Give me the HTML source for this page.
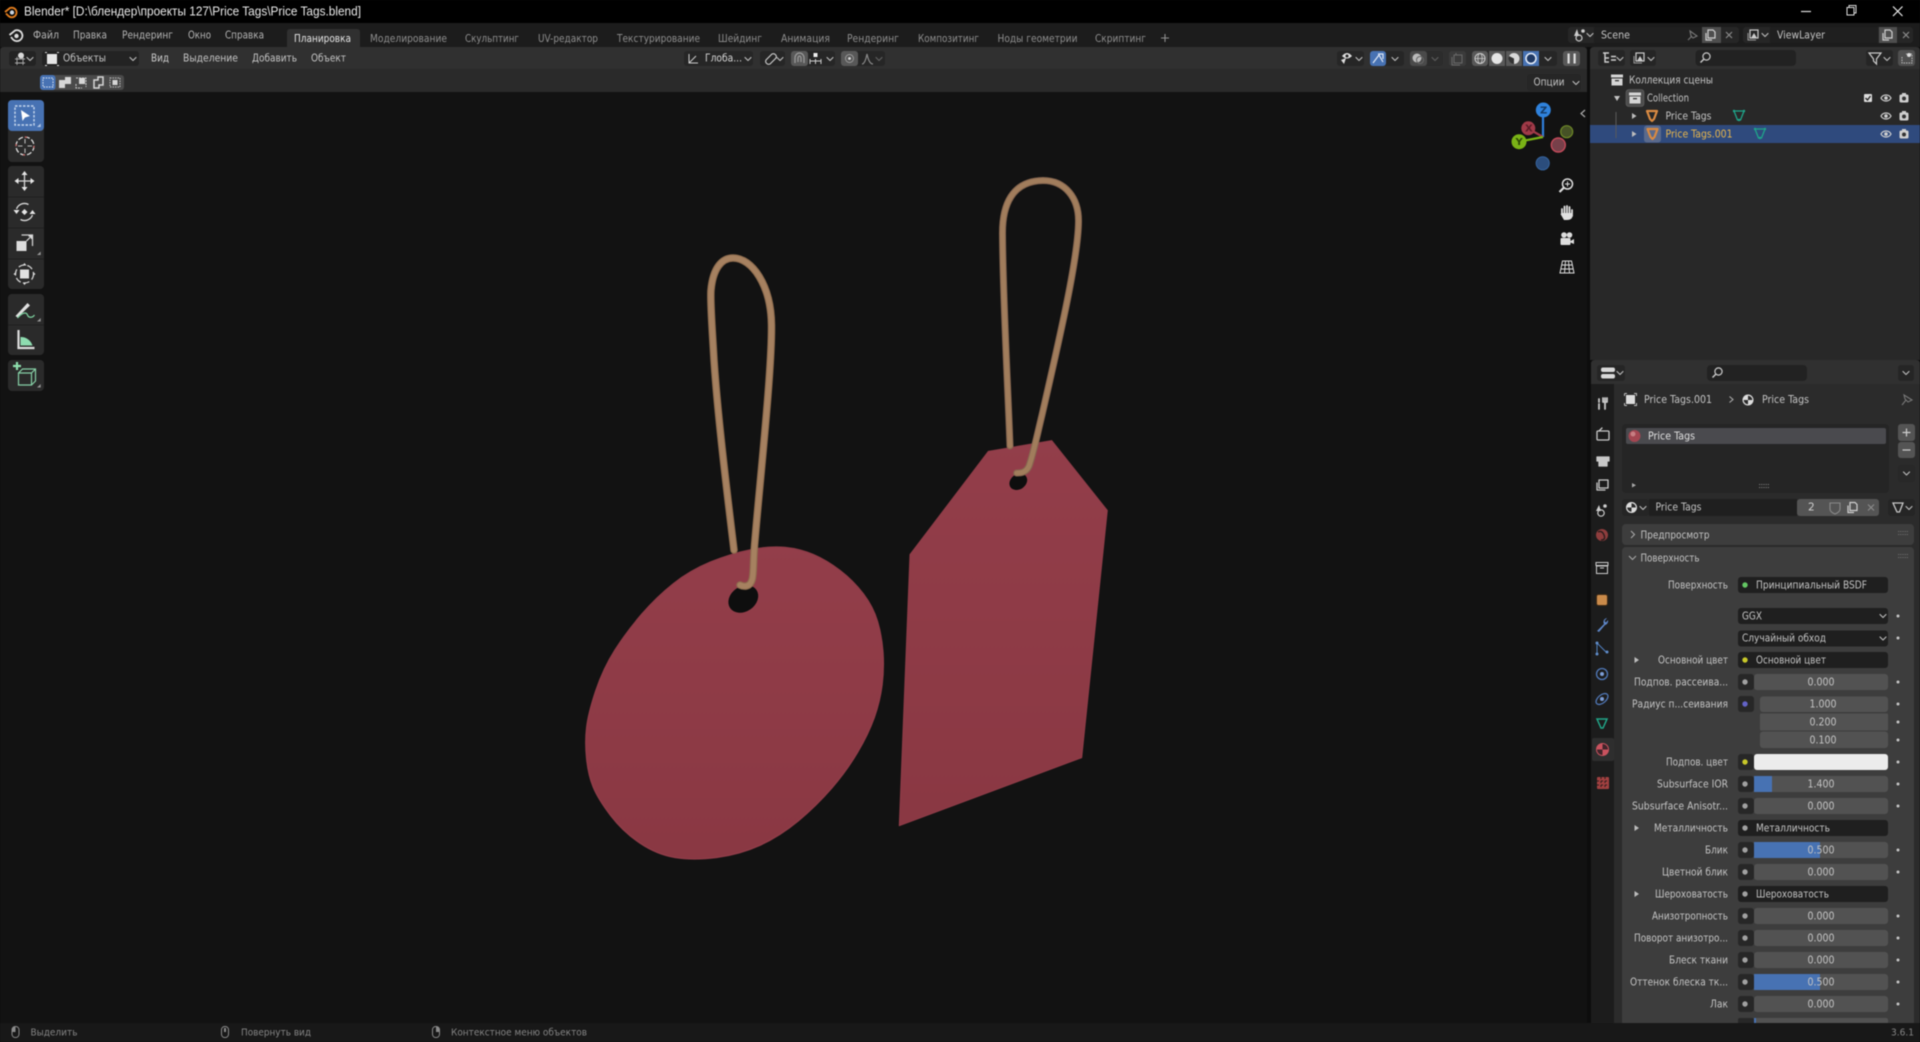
<!DOCTYPE html>
<html lang="ru"><head><meta charset="utf-8"><title>Blender</title>
<style>
html,body{margin:0;padding:0;background:#0d0d0d;width:1920px;height:1042px;overflow:hidden}
svg{display:block;filter:blur(.4px)}
text{font-family:"DejaVu Sans","Liberation Sans",sans-serif;font-size:10.5px;fill:#c4c4c4;white-space:pre;transform:translateY(-.6px)}
.m{fill:#b4b4b4}.d{fill:#8e8e8e}.w{fill:#e6e6e6}.s{fill:#858585;font-size:10px}
.ic{fill:none;stroke:#c8c8c8;stroke-width:1.3;stroke-linecap:round;stroke-linejoin:round}
.f{fill:#1f1f1f}.b{fill:#545454}.p{fill:#3d3d3d}
</style></head><body>
<svg width="1920" height="1042" viewBox="0 0 1920 1042" xmlns="http://www.w3.org/2000/svg">
<defs>
<path id="ch" d="M-3,-1.5L0,1.5L3,-1.5" fill="none" stroke="#b8b8b8" stroke-width="1.2" stroke-linecap="round" stroke-linejoin="round"/>
<path id="arr" d="M-2,-3L2.5,0L-2,3Z" fill="#bdbdbd"/>
<g id="eye"><path d="M-5,0C-3,-4 3,-4 5,0C3,4 -3,4 -5,0Z" fill="none" stroke="#d0d0d0" stroke-width="1.2"/><circle r="1.8" fill="#d0d0d0"/></g>
<g id="cam"><rect x="-4.5" y="-3.5" width="9" height="8" rx="1.5" fill="#cfcfcf"/><rect x="-2" y="-5" width="4" height="2" fill="#cfcfcf"/><circle cy=".5" r="2" fill="#333"/></g>
<g id="tri"><path d="M-5,-5L5,-5L2,3L0,5L-2,3Z" fill="none" stroke="#d98a42" stroke-width="2.2" stroke-linejoin="round"/></g>
<g id="mesh"><path d="M-5,-5L5,-5L1.5,4H-1.5Z" fill="none" stroke="#1fa58a" stroke-width="1.3"/><circle cx="-5" cy="-5" r="1.2" fill="#1fa58a"/><circle cx="5" cy="-5" r="1.2" fill="#1fa58a"/><circle cy="4" r="1.2" fill="#1fa58a"/></g>
<g id="coll"><rect x="-6" y="-5.5" width="12" height="3" fill="#d6d6d6"/><rect x="-5.5" y="-1.5" width="11" height="7" fill="#d6d6d6"/><rect x="-2" y="0" width="4" height="1.3" fill="#333"/></g>
<g id="mat"><circle r="5.5" fill="#dcdcdc"/><path d="M0,0V-4.3A4.3,4.3 0 0 1 4.300,0Z M0,0V4.300A4.300,4.300 0 0 1 -4.300,0Z" fill="#2a2a2a"/></g>
<g id="copy"><path d="M-3,-5H2L4,-3V3H-3Z M-5,-2V5H1" fill="none" stroke="#d0d0d0" stroke-width="1.2"/></g>
<g id="x"><path d="M-3,-3L3,3M3,-3L-3,3" stroke="#8a8a8a" stroke-width="1.2"/></g>
<g id="mag"><circle cx="1.5" cy="-1.5" r="3.6" fill="none" stroke="#c8c8c8" stroke-width="1.2"/><path d="M-1,1L-4.5,4.5" stroke="#c8c8c8" stroke-width="1.5"/></g>
<circle id="o" r="1.5" fill="#c6c6c6"/>
<g id="mouse"><rect x="-3.5" y="-5.5" width="7" height="11" rx="3.2" fill="none" stroke="#8a8a8a" stroke-width="1"/></g>
<linearGradient id="tg" x1="0" y1="0" x2="0" y2="1"><stop offset="0" stop-color="#933e4a"/><stop offset="1" stop-color="#8a3843"/></linearGradient>
</defs>

<!-- base -->
<rect width="1920" height="1042" fill="#0d0d0d"/>
<rect width="1920" height="23" fill="#000"/>
<rect y="23" width="1920" height="24" fill="#1c1c1c"/>
<rect y="1024" width="1920" height="18" fill="#181818"/>

<!-- title -->
<g transform="translate(11,12.500)"><circle cx="1" r="2.200" fill="#c9d4e0"/><path d="M-6,-.5L-1,-4.500A4.800,4.800 0 1 1 -2.500,3.500L-5,1" fill="none" stroke="#e07c1e" stroke-width="1.900"/></g>
<text x="24" y="16" textLength="337" lengthAdjust="spacingAndGlyphs" style="font-size:12.5px;fill:#e8e8e8;font-family:'Liberation Sans',sans-serif">Blender* [D:\блендер\проекты 127\Price Tags\Price Tags.blend]</text>
<path d="M1801,11.500H1811" stroke="#ddd" stroke-width="1.2"/>
<path d="M1847,7.500H1854V15H1847ZM1849,7.500V5.500H1856V13H1854" fill="none" stroke="#ddd" stroke-width="1"/>
<path d="M1893,6.500L1902.500,16M1902.500,6.500L1893,16" stroke="#eee" stroke-width="1.2"/>

<!-- topbar -->
<g transform="translate(16,36)"><circle cx=".5" r="2.200" fill="#ddd"/><path d="M-6.500,-1L-1,-5.500A5.500,5.500 0 1 1 -3,3.500L-5,1" fill="none" stroke="#ddd" stroke-width="1.800"/></g>
<text class="m" x="33" y="39" textLength="26" lengthAdjust="spacingAndGlyphs">Файл</text>
<text class="m" x="73" y="39" textLength="34" lengthAdjust="spacingAndGlyphs">Правка</text>
<text class="m" x="122" y="39" textLength="51" lengthAdjust="spacingAndGlyphs">Рендеринг</text>
<text class="m" x="188" y="39" textLength="23" lengthAdjust="spacingAndGlyphs">Окно</text>
<text class="m" x="225" y="39" textLength="39" lengthAdjust="spacingAndGlyphs">Справка</text>
<path d="M287,47V32Q287,29 290,29H357Q360,29 360,32V47Z" fill="#303030"/>
<text class="w" x="294" y="42.500" textLength="57" lengthAdjust="spacingAndGlyphs">Планировка</text>
<text class="d" x="370" y="42.500" textLength="77" lengthAdjust="spacingAndGlyphs">Моделирование</text>
<text class="d" x="465" y="42.500" textLength="54" lengthAdjust="spacingAndGlyphs">Скульптинг</text>
<text class="d" x="538" y="42.500" textLength="60" lengthAdjust="spacingAndGlyphs">UV-редактор</text>
<text class="d" x="617" y="42.500" textLength="83" lengthAdjust="spacingAndGlyphs">Текстурирование</text>
<text class="d" x="718" y="42.500" textLength="44" lengthAdjust="spacingAndGlyphs">Шейдинг</text>
<text class="d" x="781" y="42.500" textLength="49" lengthAdjust="spacingAndGlyphs">Анимация</text>
<text class="d" x="847" y="42.500" textLength="52" lengthAdjust="spacingAndGlyphs">Рендеринг</text>
<text class="d" x="918" y="42.500" textLength="61" lengthAdjust="spacingAndGlyphs">Композитинг</text>
<text class="d" x="997.500" y="42.500" textLength="80" lengthAdjust="spacingAndGlyphs">Ноды геометрии</text>
<text class="d" x="1095" y="42.500" textLength="51" lengthAdjust="spacingAndGlyphs">Скриптинг</text>
<path d="M1161,38H1169M1165,34V42" stroke="#8e8e8e" stroke-width="1.100"/>

<!-- scene / viewlayer -->
<rect x="1568" y="27" width="171" height="16" rx="3" fill="#262626"/>
<rect x="1594" y="27" width="108" height="16" fill="#1f1f1f"/>
<g transform="translate(1580,35)"><circle cx="-1" cy="3" r="3" fill="none" stroke="#ccc" stroke-width="1.200"/><path d="M-3,-6L-6,1H-1Z" fill="#ccc"/><circle cx="3" cy="-4" r="1.800" fill="#ccc"/></g>
<use href="#ch" x="1590" y="35"/>
<text x="1601" y="39" textLength="29" lengthAdjust="spacingAndGlyphs">Scene</text>
<path d="M1688,40L1692,36M1690,31L1697,36L1693,38L1691,36Z" fill="none" stroke="#777" stroke-width="1.100"/>
<rect x="1702" y="27" width="19" height="16" fill="#4e4e4e"/><use href="#copy" x="1711" y="35"/>
<use href="#x" x="1729" y="35"/>
<rect x="1743" y="27" width="170" height="16" rx="3" fill="#262626"/>
<rect x="1770" y="27" width="108" height="16" fill="#1f1f1f"/>
<g transform="translate(1754,35)"><rect x="-4" y="-5" width="8" height="8" fill="none" stroke="#ccc" stroke-width="1.200"/><path d="M-3,3L0,-2L3,3Z" fill="#ccc"/><path d="M-6,-2V5H2" stroke="#999" fill="none"/></g>
<use href="#ch" x="1765" y="35"/>
<text x="1777" y="39" textLength="48" lengthAdjust="spacingAndGlyphs">ViewLayer</text>
<rect x="1879" y="27" width="18" height="16" fill="#4e4e4e"/><use href="#copy" x="1888" y="35"/>
<use href="#x" x="1906" y="35"/>

<!-- 3D viewport -->
<rect x="0" y="47" width="1587" height="977" fill="#121212"/>
<path d="M0,69V51Q0,47 4,47H1583Q1587,47 1587,51V69Z" fill="#303030"/>
<rect y="69" width="1587" height="23" fill="#2a2a2a"/>

<!-- header left -->
<rect x="9" y="51" width="27" height="15" rx="3" fill="#232323"/>
<g transform="translate(20,58)"><path d="M-5,1H5M-5,5H5M-3,-1V7M3,-1V7" stroke="#aaa" stroke-width=".9"/><circle cx="1" cy="-2.500" r="3" fill="#d8d8d8"/></g><use href="#ch" x="30" y="59"/>
<rect x="42" y="51" width="97" height="15" rx="3" fill="#232323"/>
<g><rect x="47" y="54" width="10" height="10" fill="#e6e6e6"/><path d="M45,52.500H47M57,52.500H59M45,65.500H47M57,65.500H59" stroke="#ddd"/></g>
<text x="63" y="62" textLength="43" lengthAdjust="spacingAndGlyphs">Объекты</text>
<use href="#ch" x="133" y="59"/>
<text class="w" x="151" y="62" textLength="18" lengthAdjust="spacingAndGlyphs" style="fill:#cfcfcf">Вид</text>
<text x="183" y="62" textLength="55" lengthAdjust="spacingAndGlyphs">Выделение</text>
<text x="252" y="62" textLength="45" lengthAdjust="spacingAndGlyphs">Добавить</text>
<text x="311" y="62" textLength="35" lengthAdjust="spacingAndGlyphs">Объект</text>

<!-- select modes -->
<rect x="40" y="75" width="84" height="15" rx="3" fill="#4a4a4a"/>
<rect x="40" y="75" width="15.500" height="15" rx="3" fill="#4772b3"/>
<rect x="43" y="78" width="10" height="9" fill="none" stroke="#dfe8f5" stroke-dasharray="1.500 1.200"/>
<path d="M59,80H65V77H71V84H65V88H59Z" fill="#d6d6d6"/>
<path d="M76,78H86V87M76,84V88H82" fill="none" stroke="#ccc" stroke-dasharray="2 1"/><rect x="79" y="78" width="6" height="6" fill="#d6d6d6"/>
<path d="M94,80H98V77H103V85H99V88H94Z" fill="none" stroke="#d6d6d6" stroke-width="1.500"/>
<rect x="110" y="78" width="10" height="9" fill="none" stroke="#bbb" stroke-dasharray="1.500 1"/><rect x="112.500" y="80" width="5" height="5" fill="#d6d6d6"/>

<!-- header centre -->
<rect x="684" y="51" width="69" height="15" rx="3" fill="#262626"/>
<path d="M689,54V63H698M689,63L696,56" fill="none" stroke="#ccc" stroke-width="1"/>
<text x="705" y="62" textLength="37" lengthAdjust="spacingAndGlyphs" style="fill:#d6d6d6">Глоба...</text>
<use href="#ch" x="748" y="59"/>
<rect x="760" y="51" width="25" height="15" rx="3" fill="#262626"/>
<path d="M772,54A3,3 0 0 1 776,58L770,64A3,3 0 0 1 766,60Z" fill="none" stroke="#ccc" stroke-width="1.100"/><use href="#ch" x="780" y="59"/>
<rect x="791" y="51" width="44" height="15" rx="3" fill="#262626"/>
<rect x="791" y="51" width="17" height="15" rx="3" fill="#585858"/>
<path d="M795,63V58A4.500,5 0 0 1 804,58V63M798,62V58A1.500,2 0 0 1 801,58V62" fill="none" stroke="#9a9a9a" stroke-width="1.300"/>
<path d="M810,61H821M810,59V64M821,59V64M815.500,59V64" stroke="#ccc" fill="none"/><rect x="813.500" y="53" width="4" height="4" fill="#eee"/>
<use href="#ch" x="830" y="59"/>
<rect x="841" y="51" width="44" height="15" rx="3" fill="#262626"/>
<rect x="841" y="51" width="17" height="15" rx="3" fill="#585858"/>
<circle cx="849.500" cy="58.500" r="4" fill="none" stroke="#9a9a9a"/><circle cx="849.500" cy="58.500" r="1.400" fill="#ddd"/>
<path d="M862,64Q865,64 867,54Q869,64 873,64" fill="none" stroke="#8a8a8a" stroke-width="1.200"/><use href="#ch" x="879" y="59" opacity=".4"/>

<!-- header right -->
<rect x="1337" y="51" width="27" height="15" rx="3" fill="#262626"/>
<path d="M1342,56Q1347,50 1352,56Q1347,61 1342,56Z" fill="#ddd"/><circle cx="1347" cy="56" r="1.500" fill="#222"/><path d="M1341,60L1346,58L1344,64Z" fill="#ddd"/><use href="#ch" x="1359" y="59"/>
<rect x="1370" y="51" width="34" height="15" rx="3" fill="#262626"/>
<rect x="1370" y="51" width="16" height="15" rx="3" fill="#4772b3"/>
<path d="M1373,63L1379,55L1383,62M1378,54H1383V59" fill="none" stroke="#dce6f5" stroke-width="1.200"/><use href="#ch" x="1395" y="59"/>
<rect x="1410" y="51" width="33" height="15" rx="3" fill="#2c2c2c"/>
<rect x="1410" y="51" width="17" height="15" rx="3" fill="#4a4a4a"/>
<circle cx="1417" cy="58" r="4.500" fill="#bbb"/><circle cx="1420" cy="60" r="3.500" fill="none" stroke="#666"/><use href="#ch" x="1435" y="59" opacity=".35"/>
<rect x="1449" y="51" width="17" height="15" rx="3" fill="#3b3b3b"/>
<path d="M1454,55H1462V63H1454ZM1456,55V53M1452,57V65H1460" fill="none" stroke="#6a6a6a"/>
<rect x="1472" y="51" width="85" height="15" rx="3" fill="#262626"/>
<rect x="1472" y="51" width="16" height="15" rx="3" fill="#585858"/><rect x="1489" y="51" width="16" height="15" fill="#585858"/><rect x="1506" y="51" width="16" height="15" fill="#585858"/><rect x="1523" y="51" width="16" height="15" fill="#4772b3"/>
<circle cx="1480" cy="58.500" r="5" fill="none" stroke="#ccc"/><ellipse cx="1480" cy="58.500" rx="2.200" ry="5" fill="none" stroke="#ccc" stroke-width=".8"/><path d="M1475,58.500H1485" stroke="#ccc" stroke-width=".8"/>
<circle cx="1497" cy="58.500" r="5.500" fill="#e4e4e4"/>
<circle cx="1514" cy="58.500" r="5.500" fill="#d8d8d8"/><path d="M1514,58.500V64A5.500,5.500 0 0 1 1509,56Z" fill="#333"/>
<circle cx="1531" cy="58.500" r="5" fill="#203a66" stroke="#e6eefa" stroke-width="1.500"/>
<use href="#ch" x="1548" y="59"/>
<rect x="1563" y="51" width="17" height="15" rx="3" fill="#585858"/>
<rect x="1567.500" y="53.500" width="2.200" height="10" fill="#ddd"/><rect x="1573.500" y="53.500" width="2.200" height="10" fill="#ddd"/>
<rect x="1527" y="74" width="54" height="17" rx="3" fill="#262626"/>
<text x="1533.500" y="86" textLength="31" lengthAdjust="spacingAndGlyphs">Опции</text><use href="#ch" x="1576" y="83"/>

<!-- scene objects -->
<path d="M750.900,549.800Q770,546 785,547.500Q800,549 813.400,554.700Q826.700,560.400 840,570.600Q853.300,580.800 863.300,594Q873.300,607.300 877.500,621.700Q881.700,636 882.900,652.300Q884,668.600 882,684.800Q880,701 874.200,717.500Q868.300,734 857.500,752.300Q846.700,770.600 831.700,788Q816.700,805.300 798.400,820.700Q780,836 760,845.200Q740,854.300 716.700,857.400Q693.300,860.400 675,857.400Q656.700,854.300 640,843Q623.300,831.800 610.800,815.500Q598.300,799.200 593.300,787Q588.300,774.700 586.700,758.400Q585,742 586.700,727.800Q588.300,713.500 595.800,691Q603.300,668.600 615,650.200Q626.700,631.800 641.700,614.400Q656.700,597 673.400,583.800Q690,570.600 710.900,562Q731.700,553.500 750.900,549.800Z" fill="url(#tg)" stroke="#8f3c48" stroke-width="1.500"/>
<ellipse cx="743.300" cy="599" rx="16" ry="12.500" transform="rotate(-35 743.300 599)" fill="#0e0e0e"/>
<path d="M734,550C728,500 718,420 714,360C712,325 710,300 711,290C713,268 722,258 733,258C752,258 771,285 771.500,325C772,370 760,480 755,540C753,560 754,575 752,580C750,587 744,587 740,585" fill="none" stroke="#8f6d4f" stroke-width="7.500" stroke-linecap="round"/>
<path d="M734,550C728,500 718,420 714,360C712,325 710,300 711,290C713,268 722,258 733,258C752,258 771,285 771.500,325C772,370 760,480 755,540C753,560 754,575 752,580C750,587 744,587 740,585" fill="none" stroke="#a68160" stroke-width="5.200" stroke-linecap="round"/>
<path d="M899.300,825.700L910,554.600L988.300,451.400L1051.700,440.600L1107.300,510.400L1081.700,757.600Z" fill="url(#tg)" stroke="#8f3c48" stroke-width="1" stroke-linejoin="round"/>
<ellipse cx="1018.300" cy="481.800" rx="9.500" ry="7.500" transform="rotate(-35 1018.300 481.800)" fill="#0e0e0e"/>
<path d="M1010,446C1008,390 1003,300 1002.500,235C1002,205 1012,181 1043,180.500C1065,180.500 1079,198 1078.500,222C1078,260 1058,345 1042,415C1036,440 1033,455 1029,466C1026,473 1020,473 1016.700,473" fill="none" stroke="#876750" stroke-width="7" stroke-linecap="round"/>
<path d="M1010,446C1008,390 1003,300 1002.500,235C1002,205 1012,181 1043,180.500C1065,180.500 1079,198 1078.500,222C1078,260 1058,345 1042,415C1036,440 1033,455 1029,466C1026,473 1020,473 1016.700,473" fill="none" stroke="#a17d5c" stroke-width="4.800" stroke-linecap="round"/>

<!-- toolbar -->
<rect x="8" y="100" width="36" height="62" rx="4" fill="#2a2a2a"/>
<rect x="8" y="100" width="36" height="31" rx="4" fill="#4772b3"/>
<rect x="15" y="106" width="19" height="19" fill="none" stroke="#c6d6ee" stroke-width="1.400" stroke-dasharray="2.500 1.500"/>
<path d="M21,110L30,116L25,117.500L22.500,121Z" fill="#fff"/>
<circle cx="25" cy="146" r="9" fill="none" stroke="#ddd" stroke-width="1.300" stroke-dasharray="5 2"/><circle cx="25" cy="146" r="9" fill="none" stroke="#c45a5a" stroke-width="1.300" stroke-dasharray="2 12"/>
<path d="M25,139V143.500M25,148.500V153M18,146H22.500M27.500,146H32" stroke="#bbb" stroke-width="1.100"/>
<path d="M40.700,123.500V127H37Z" fill="#b7c9e6"/>
<rect x="8" y="166" width="36" height="123" rx="4" fill="#2a2a2a"/>
<path d="M8,197H44M8,228H44M8,259H44" stroke="#1c1c1c" stroke-width=".7"/>
<g transform="translate(24.500,181)"><path d="M0,-7V7M-7,0H7" stroke="#d8d8d8" stroke-width="1.300"/><path d="M0,-10L-3,-6H3ZM0,10L-3,6H3ZM-10,0L-6,-3V3ZM10,0L6,-3V3Z" fill="#e6e6e6"/></g>
<g transform="translate(24.500,212)"><path d="M-8,-3A8.500,8.500 0 0 1 4,-7.500M8,3A8.500,8.500 0 0 1 -4,7.500" fill="none" stroke="#d8d8d8" stroke-width="1.300"/><path d="M0,-3L3,0L0,3L-3,0Z" fill="#e6e6e6"/><path d="M-11,-2H-5L-8,2ZM11,2H5L8,-2Z" fill="#e6e6e6"/></g>
<g transform="translate(24.500,243)"><rect x="-8" y="-2" width="10" height="10" fill="#dcdcdc"/><path d="M-3,-8H8V3" fill="none" stroke="#d0d0d0" stroke-width="1.300"/><path d="M2,-2L7,-7M4,-7H7V-4" fill="none" stroke="#ddd" stroke-width="1.200"/></g>
<path d="M40.700,251.500V255H37Z" fill="#999"/>
<g transform="translate(24.500,274)"><circle r="9" fill="none" stroke="#d0d0d0" stroke-width="1.300" stroke-dasharray="6 3"/><rect x="-4.500" y="-4.500" width="9" height="9" fill="#e0e0e0"/><path d="M0,-11L-2,-8.500H2ZM0,11L-2,8.500H2ZM-11,0L-8.500,-2V2ZM11,0L8.500,-2V2Z" fill="#ddd"/></g>
<rect x="8" y="294" width="36" height="61" rx="4" fill="#2a2a2a"/>
<path d="M8,325H44" stroke="#1c1c1c" stroke-width=".7"/>
<g transform="translate(24.500,310)"><path d="M-9,6L3,-7L5.500,-4.500L-7,7.500Z" fill="#e0e0e0"/><path d="M-7,8C-2,2 2,2 3,5S8,8 10,5" fill="none" stroke="#7ed2a0" stroke-width="1.200"/></g>
<path d="M40.700,318V321.500H37Z" fill="#999"/>
<g transform="translate(24.500,340)"><path d="M-6,-10V8H10" fill="none" stroke="#dcdcdc" stroke-width="2.200"/><path d="M-4,-3A12,12 0 0 1 8,5.500H-4Z" fill="#8edcb0"/></g>
<rect x="8" y="360" width="36" height="31" rx="4" fill="#2a2a2a"/>
<g transform="translate(26.500,377)"><path d="M-8,-4H5V8H-8ZM-8,-4L-4,-8H9V4L5,8M5,-4L9,-8" fill="none" stroke="#86d0a6" stroke-width="1.200"/></g>
<path d="M13,366H21M17,362V370" stroke="#8fe0ae" stroke-width="2.200"/>
<path d="M40.700,384V387.500H37Z" fill="#999"/>

<!-- nav gizmo -->
<path d="M1543,137V112" stroke="#2f7fdc" stroke-width="2.200"/>
<path d="M1543,137L1529,129" stroke="#a03a48" stroke-width="2.200"/>
<path d="M1543,137L1520,141.500" stroke="#7ab316" stroke-width="2.200"/>
<circle cx="1566.700" cy="131.700" r="6" fill="#465226" stroke="#6f8a28" stroke-width="1.200"/>
<circle cx="1558.300" cy="145" r="7" fill="#77404a" stroke="#c44a5a" stroke-width="1.400"/>
<circle cx="1542.700" cy="163.300" r="6.600" fill="#2b4d7c" stroke="#36649e" stroke-width="1"/>
<circle cx="1528.300" cy="128.300" r="7" fill="#a03a48"/>
<circle cx="1543.300" cy="110" r="7.500" fill="#2f82dc"/>
<circle cx="1519" cy="141.700" r="7.500" fill="#7ab316"/>
<text x="1540" y="114" style="font-size:10px;fill:#143a66;font-weight:bold">Z</text>
<text x="1525" y="132" style="font-size:10px;fill:#5a1c26;font-weight:bold">X</text>
<text x="1515.500" y="145.500" style="font-size:10px;fill:#2e4a06;font-weight:bold">Y</text>
<path d="M1585,110L1581,113.500L1585,117" fill="none" stroke="#aaa" stroke-width="1.200"/>
<g transform="translate(1566,185.500)"><circle cx="1.500" cy="-1.500" r="5" fill="none" stroke="#ddd" stroke-width="1.500"/><path d="M-2,2L-6.500,6.500" stroke="#ddd" stroke-width="2.200"/><path d="M-1,-1.500H4M1.500,-4V1" stroke="#ddd"/></g>
<g transform="translate(1567,213)"><path d="M-5,1L-5,-4M-2.500,3V-6.500M0,3V-7M2.500,3V-6M5,3V-3" stroke="#e0e0e0" stroke-width="1.800" stroke-linecap="round"/><path d="M-5,0H5.500V3Q5,7 0,7H-3L-6.500,1Z" fill="#e0e0e0"/></g>
<g transform="translate(1567,239)"><circle cx="-3" cy="-4" r="2.800" fill="#ddd"/><circle cx="2.500" cy="-4" r="2.800" fill="#ddd"/><rect x="-6.500" y="-1" width="10" height="7" rx="1" fill="#ddd"/><path d="M3.500,2L7,0V5L3.500,3.500Z" fill="#ddd"/></g>
<g transform="translate(1567,267)"><path d="M-4.500,-6H4.500L7,6H-7ZM-1.500,-6L-2.500,6M1.500,-6L2.500,6M-5.500,-2H5.500M-6.200,2H6.200" fill="none" stroke="#ddd" stroke-width="1"/></g>

<!-- outliner -->
<path d="M1590,51Q1590,47 1594,47H1916Q1920,47 1920,51V69H1590Z" fill="#303030"/>
<path d="M1590,69H1920V360H1590Z" fill="#282828"/>
<rect x="1590" y="125" width="330" height="18" fill="#2f4a7d"/>
<rect x="1598" y="50" width="27" height="16" rx="3" fill="#252525"/>
<path d="M1603,53H1609M1605,53V62H1609M1605,58H1609M1611,56.500H1616M1611,60H1616" fill="none" stroke="#d0d0d0" stroke-width="1.400"/><use href="#ch" x="1620" y="59"/>
<rect x="1630" y="50" width="26" height="16" rx="3" fill="#252525"/>
<g transform="translate(1640,58)"><rect x="-4" y="-5" width="8" height="8" fill="none" stroke="#ccc" stroke-width="1.200"/><path d="M-3,3L0,-2L3,3Z" fill="#ccc"/><path d="M-6,-2V5H2" stroke="#999" fill="none"/></g><use href="#ch" x="1651" y="59"/>
<rect x="1695.500" y="50" width="100.500" height="16" rx="4" fill="#222"/>
<use href="#mag" x="1705" y="58"/>
<rect x="1866" y="50" width="27" height="16" rx="3" fill="#252525"/>
<path d="M1869,53H1881L1876.500,59V64L1873.500,61V59Z" fill="none" stroke="#ccc" stroke-width="1.200"/><use href="#ch" x="1887" y="59"/>
<rect x="1898" y="50" width="17" height="16" rx="3" fill="#505050"/>
<path d="M1902,57V63H1912V54H1906" fill="none" stroke="#bbb" stroke-dasharray="1.500 1"/><circle cx="1909" cy="55" r="2" fill="#ddd"/>

<use href="#coll" x="1617" y="80"/>
<text x="1629" y="84" textLength="84" lengthAdjust="spacingAndGlyphs">Коллекция сцены</text>
<path d="M1614,96L1620,96L1617,101Z" fill="#c4c4c4"/>
<rect x="1626" y="89.500" width="18" height="17" rx="3" fill="#4d4d4d" stroke="#666" stroke-width=".6"/><use href="#coll" x="1635" y="98"/>
<text x="1647" y="102" textLength="42" lengthAdjust="spacingAndGlyphs">Collection</text>
<rect x="1864" y="94" width="8" height="8" rx="1" fill="#dcdcdc"/><path d="M1865.500,98L1867.500,100L1870.500,96" fill="none" stroke="#222" stroke-width="1.300"/>
<use href="#eye" x="1886" y="98"/><use href="#cam" x="1904" y="98"/>
<path d="M1616,112V138" stroke="#5a5a5a"/>
<use href="#arr" x="1634" y="116"/><use href="#tri" x="1652" y="116"/>
<text x="1665.500" y="120" textLength="46" lengthAdjust="spacingAndGlyphs">Price Tags</text><use href="#mesh" x="1739" y="116"/>
<use href="#eye" x="1886" y="116"/><use href="#cam" x="1904" y="116"/>
<use href="#arr" x="1634" y="134"/>
<rect x="1644" y="125.500" width="17" height="17" rx="3" fill="#5a6a8c"/><use href="#tri" x="1652.500" y="134"/>
<text x="1665.500" y="138" textLength="67" lengthAdjust="spacingAndGlyphs" style="fill:#e8b64c">Price Tags.001</text><use href="#mesh" x="1760" y="134"/>
<use href="#eye" x="1886" y="134"/><use href="#cam" x="1904" y="134"/>

<!-- properties -->
<path d="M1591,363Q1591,359 1595,359H1916Q1920,359 1920,363V384H1591Z" fill="#303030" transform="translate(0,1)"/>
<rect x="1591" y="384" width="329" height="639" fill="#2b2b2b"/>
<rect x="1591" y="384" width="23" height="639" fill="#1c1c1c"/>
<rect x="1597" y="365" width="28" height="16" rx="3" fill="#252525"/>
<rect x="1601" y="367.500" width="14" height="4.500" rx="2" fill="#d8d8d8"/><rect x="1601" y="374" width="14" height="4.500" rx="2" fill="#d8d8d8"/><use href="#ch" x="1620" y="373"/>
<rect x="1707" y="365" width="100" height="16" rx="4" fill="#222"/>
<use href="#mag" x="1717" y="373"/>
<rect x="1898" y="365" width="16" height="16" rx="3" fill="#252525"/><use href="#ch" x="1906" y="373"/>

<!-- tabs -->
<g class="ic">
<path d="M1599,404V409M1599,399V402M1605,398V402M1603,398V402H1607V398M1605,402V409" stroke-width="1.800"/>
<rect x="1597" y="431" width="12" height="9" rx="1"/><path d="M1599,431L1602,428" />
<path d="M1597,457H1609V461H1597ZM1599,461V466H1607V461" fill="#c8c8c8"/>
<rect x="1599" y="480" width="9" height="8"/><path d="M1597,483V490H1605"/>
</g>
<g transform="translate(1602,510)"><circle cx="-1" cy="3" r="3.200" fill="none" stroke="#ccc" stroke-width="1.200"/><path d="M-3,-5L-6,1H-1Z" fill="#ccc"/><circle cx="3" cy="-4" r="1.800" fill="#ccc"/></g>
<circle cx="1602" cy="535" r="6" fill="#8e3d3d"/><path d="M1598,532Q1602,530 1604,535T1601,540" stroke="#2b1c1c" fill="none" stroke-width="1.400"/>
<g transform="translate(1602,568)"><rect x="-6" y="-5.500" width="12" height="3" fill="none" stroke="#ccc"/><rect x="-5.500" y="-2" width="11" height="7.500" fill="none" stroke="#ccc"/><path d="M-2,0H2" stroke="#ccc"/></g>
<rect x="1596.500" y="594.500" width="11" height="11" rx="2" fill="#c98a4a" stroke="#3d2a16"/>
<path d="M1597,631L1604,624A4,4 0 0 1 1607,618L1604.500,621L1606,622.500L1608,620A4,4 0 0 1 1605,625L1599,632Z" fill="#5e86c8"/>
<path d="M1597,643L1606,652M1597,643V654" stroke="#4f7fbf" fill="none" stroke-width="1"/><circle cx="1597" cy="643" r="1.500" fill="#5f8cc8"/><circle cx="1607" cy="652" r="1.500" fill="#5f8cc8"/><circle cx="1597" cy="654" r="1.500" fill="#5f8cc8"/>
<circle cx="1602" cy="674" r="5.500" fill="none" stroke="#5078b8" stroke-width="1.300"/><circle cx="1602" cy="674" r="2" fill="#7c9ed8"/>
<ellipse cx="1602" cy="699" rx="7" ry="4" transform="rotate(-40 1602 699)" fill="none" stroke="#5078b8" stroke-width="1.300"/><circle cx="1602" cy="699" r="2" fill="#7c9ed8"/>
<path d="M1597,719H1607L1603,728H1601Z" fill="none" stroke="#21a588" stroke-width="1.500"/>
<rect x="1592" y="738" width="22" height="23" rx="2" fill="#2e2e2e"/>
<circle cx="1602.500" cy="749.500" r="6.500" fill="#c9525e"/><path d="M1602.500,749.500V744A5.500,5.500 0 0 1 1608,749.500ZM1602.500,749.500V755A5.500,5.500 0 0 1 1597,749.500Z" fill="#40242a"/>
<g fill="#a04040"><rect x="1597" y="777" width="12" height="12" rx="1"/></g><path d="M1597,781H1609M1597,785H1609M1601,777V789M1605,777V789" stroke="#2b1c1c" stroke-dasharray="2 2"/>

<!-- breadcrumb -->
<rect x="1626" y="395" width="9" height="9" fill="#dcdcdc"/><path d="M1624.500,393.500H1627M1634,393.500H1636.500V396M1624.500,393.500V396M1624.500,405.500H1627M1624.500,403V405.500M1636.500,403V405.500H1634" fill="none" stroke="#bbb"/>
<text x="1644" y="403.500" textLength="68" lengthAdjust="spacingAndGlyphs">Price Tags.001</text>
<path d="M1729.500,396.500L1733,399.500L1729.500,402.500" fill="none" stroke="#aaa" stroke-width="1.100"/>
<use href="#mat" x="1748" y="400"/>
<text x="1762" y="403.500" textLength="47" lengthAdjust="spacingAndGlyphs">Price Tags</text>
<path d="M1902,405L1906,400M1904,395L1912,400L1908,402L1905,399Z" fill="none" stroke="#777" stroke-width="1.100"/>

<!-- material slots -->
<rect x="1622" y="424" width="267" height="69" rx="4" fill="#252525"/>
<rect x="1626" y="428" width="260" height="16" rx="2" fill="#4a4a4e"/>
<circle cx="1634.500" cy="436" r="6" fill="#a34651"/><circle cx="1633" cy="434" r="2.500" fill="#e0a4a4" opacity=".6"/>
<text x="1648" y="440" textLength="47" lengthAdjust="spacingAndGlyphs" style="fill:#e0e0e0">Price Tags</text>
<path d="M1632,483V487.500L1636,485.200Z" fill="#a8a8a8"/>
<path d="M1759,484.500H1769M1759,487.500H1769" stroke="#777" stroke-dasharray="1.200 1"/>
<rect x="1898" y="424" width="17" height="17" fill="#545454" rx="3"/><path d="M1902.500,432.500H1910.500M1906.500,428.500V436.500" stroke="#cfcfcf" stroke-width="1.200"/>
<rect x="1898" y="442" width="17" height="16" fill="#545454" rx="3"/><path d="M1902.500,450H1910.500" stroke="#cfcfcf" stroke-width="1.200"/>
<rect x="1898" y="465" width="17" height="17" fill="#282828" rx="3"/><use href="#ch" x="1906.500" y="473.500"/>
<rect x="1622" y="499" width="27" height="17" rx="3" fill="#252525"/>
<use href="#mat" x="1631.500" y="507.500"/><use href="#ch" x="1643" y="508"/>
<rect x="1649" y="499" width="148" height="17" fill="#1f1f1f"/>
<text x="1655.500" y="511" textLength="46" lengthAdjust="spacingAndGlyphs">Price Tags</text>
<rect x="1797" y="499" width="82" height="17" rx="3" fill="#545454"/>
<text x="1808" y="511" style="fill:#d0d0d0">2</text>
<path d="M1830,503H1840V509Q1840,512 1835,514Q1830,512 1830,509Z" fill="none" stroke="#8a8a8a" stroke-width="1.100"/>
<use href="#copy" x="1853" y="507.500"/><use href="#x" x="1871" y="507.500"/>
<rect x="1888" y="499" width="27" height="17" rx="3" fill="#252525"/>
<path d="M1893,503H1903L1899.500,512H1897Z" fill="none" stroke="#c8c8c8" stroke-width="1.300"/><use href="#ch" x="1909" y="508"/>

<!-- panels -->
<rect x="1622" y="524" width="292" height="21" rx="4" class="p"/>
<path d="M1631,531L1634.500,534.500L1631,538" fill="none" stroke="#a8a8a8" stroke-width="1.100"/>
<text x="1640.500" y="539" textLength="69" lengthAdjust="spacingAndGlyphs">Предпросмотр</text>
<path d="M1898,531.500H1909M1898,534.500H1909" stroke="#6b6b6b" stroke-dasharray="1.200 1"/>
<rect x="1622" y="547" width="292" height="480" rx="4" class="p"/>
<path d="M1629,556L1632.500,559.500L1636,556" fill="none" stroke="#a8a8a8" stroke-width="1.100"/>
<text x="1640.500" y="562" textLength="59" lengthAdjust="spacingAndGlyphs">Поверхность</text>
<path d="M1898,554.500H1909M1898,557.500H1909" stroke="#6b6b6b" stroke-dasharray="1.200 1"/>

<text x="1668" y="589" textLength="60" lengthAdjust="spacingAndGlyphs">Поверхность</text>
<rect x="1738" y="577" width="150" height="16" rx="3" class="f"/><circle cx="1745" cy="585" r="2.700" fill="#63c763"/>
<text x="1756" y="589" textLength="111" lengthAdjust="spacingAndGlyphs">Принципиальный BSDF</text>

<rect x="1738" y="608" width="150" height="16" rx="3" class="f"/>
<text x="1742" y="620" textLength="20" lengthAdjust="spacingAndGlyphs">GGX</text><use href="#ch" x="1883" y="616"/><use href="#o" x="1898" y="616"/>
<rect x="1738" y="630.500" width="150" height="16" rx="3" class="f"/>
<text x="1742" y="642" textLength="84" lengthAdjust="spacingAndGlyphs">Случайный обход</text><use href="#ch" x="1883" y="638.500"/><use href="#o" x="1898" y="638"/>

<use href="#arr" x="1636.500" y="660"/>
<text x="1658" y="664" textLength="70" lengthAdjust="spacingAndGlyphs">Основной цвет</text>
<rect x="1738" y="652" width="150" height="16" rx="3" class="f"/><circle cx="1745" cy="660" r="2.700" fill="#c7c729"/>
<text x="1756" y="664" textLength="70" lengthAdjust="spacingAndGlyphs">Основной цвет</text>

<text x="1634" y="686" textLength="94" lengthAdjust="spacingAndGlyphs">Подпов. рассеива...</text>
<rect x="1738" y="674" width="16" height="16" rx="3" fill="#272727"/><circle cx="1745" cy="682" r="2.700" fill="#a1a1a1"/>
<rect x="1754" y="674" width="134" height="16" rx="3" fill="#525252"/>
<text x="1807.500" y="686" textLength="27" lengthAdjust="spacingAndGlyphs">0.000</text><use href="#o" x="1898" y="682"/>

<text x="1632" y="708" textLength="96" lengthAdjust="spacingAndGlyphs">Радиус п...сеивания</text>
<rect x="1738" y="696" width="16" height="16" rx="3" fill="#272727"/><circle cx="1745" cy="704" r="2.700" fill="#6363c7"/>
<rect x="1760" y="696.500" width="128" height="15.500" rx="3" fill="#525252"/>
<rect x="1760" y="713.500" width="128" height="17" rx="1" fill="#525252"/>
<rect x="1760" y="731.500" width="128" height="16.500" rx="3" fill="#525252"/>
<text x="1809.500" y="708" textLength="27" lengthAdjust="spacingAndGlyphs">1.000</text><use href="#o" x="1898" y="704"/>
<text x="1809.500" y="726" textLength="27" lengthAdjust="spacingAndGlyphs">0.200</text><use href="#o" x="1898" y="722"/>
<text x="1809.500" y="744" textLength="27" lengthAdjust="spacingAndGlyphs">0.100</text><use href="#o" x="1898" y="740"/>

<text x="1666" y="766" textLength="62" lengthAdjust="spacingAndGlyphs">Подпов. цвет</text>
<rect x="1738" y="754" width="16" height="16" rx="3" fill="#272727"/><circle cx="1745" cy="762" r="2.700" fill="#c7c729"/>
<rect x="1754" y="754" width="134" height="16" rx="3" fill="#ececec"/><use href="#o" x="1898" y="762"/>

<text x="1657" y="788" textLength="71" lengthAdjust="spacingAndGlyphs">Subsurface IOR</text>
<rect x="1738" y="776" width="16" height="16" rx="3" fill="#272727"/><circle cx="1745" cy="784" r="2.700" fill="#a1a1a1"/>
<rect x="1754" y="776" width="134" height="16" rx="3" fill="#525252"/><rect x="1754" y="776" width="18" height="16" fill="#4772b3"/>
<text x="1807.500" y="788" textLength="27" lengthAdjust="spacingAndGlyphs">1.400</text><use href="#o" x="1898" y="784"/>

<text x="1632" y="810" textLength="96" lengthAdjust="spacingAndGlyphs">Subsurface Anisotr...</text>
<rect x="1738" y="798" width="16" height="16" rx="3" fill="#272727"/><circle cx="1745" cy="806" r="2.700" fill="#a1a1a1"/>
<rect x="1754" y="798" width="134" height="16" rx="3" fill="#525252"/>
<text x="1807.500" y="810" textLength="27" lengthAdjust="spacingAndGlyphs">0.000</text><use href="#o" x="1898" y="806"/>

<use href="#arr" x="1636.500" y="828"/>
<text x="1654" y="832" textLength="74" lengthAdjust="spacingAndGlyphs">Металличность</text>
<rect x="1738" y="820" width="150" height="16" rx="3" class="f"/><circle cx="1745" cy="828" r="2.700" fill="#a1a1a1"/>
<text x="1756" y="832" textLength="74" lengthAdjust="spacingAndGlyphs">Металличность</text>

<text x="1705" y="854" textLength="23" lengthAdjust="spacingAndGlyphs">Блик</text>
<rect x="1738" y="842" width="16" height="16" rx="3" fill="#272727"/><circle cx="1745" cy="850" r="2.700" fill="#a1a1a1"/>
<rect x="1754" y="842" width="134" height="16" rx="3" fill="#525252"/><rect x="1754" y="842" width="66" height="16" fill="#4772b3"/>
<text x="1807.500" y="854" textLength="27" lengthAdjust="spacingAndGlyphs">0.500</text><use href="#o" x="1898" y="850"/>

<text x="1662" y="876" textLength="66" lengthAdjust="spacingAndGlyphs">Цветной блик</text>
<rect x="1738" y="864" width="16" height="16" rx="3" fill="#272727"/><circle cx="1745" cy="872" r="2.700" fill="#a1a1a1"/>
<rect x="1754" y="864" width="134" height="16" rx="3" fill="#525252"/>
<text x="1807.500" y="876" textLength="27" lengthAdjust="spacingAndGlyphs">0.000</text><use href="#o" x="1898" y="872"/>

<use href="#arr" x="1636.500" y="894"/>
<text x="1655" y="898" textLength="73" lengthAdjust="spacingAndGlyphs">Шероховатость</text>
<rect x="1738" y="886" width="150" height="16" rx="3" class="f"/><circle cx="1745" cy="894" r="2.700" fill="#a1a1a1"/>
<text x="1756" y="898" textLength="73" lengthAdjust="spacingAndGlyphs">Шероховатость</text>

<text x="1652" y="920" textLength="76" lengthAdjust="spacingAndGlyphs">Анизотропность</text>
<rect x="1738" y="908" width="16" height="16" rx="3" fill="#272727"/><circle cx="1745" cy="916" r="2.700" fill="#a1a1a1"/>
<rect x="1754" y="908" width="134" height="16" rx="3" fill="#525252"/>
<text x="1807.500" y="920" textLength="27" lengthAdjust="spacingAndGlyphs">0.000</text><use href="#o" x="1898" y="916"/>

<text x="1634" y="942" textLength="94" lengthAdjust="spacingAndGlyphs">Поворот анизотро...</text>
<rect x="1738" y="930" width="16" height="16" rx="3" fill="#272727"/><circle cx="1745" cy="938" r="2.700" fill="#a1a1a1"/>
<rect x="1754" y="930" width="134" height="16" rx="3" fill="#525252"/>
<text x="1807.500" y="942" textLength="27" lengthAdjust="spacingAndGlyphs">0.000</text><use href="#o" x="1898" y="938"/>

<text x="1669" y="964" textLength="59" lengthAdjust="spacingAndGlyphs">Блеск ткани</text>
<rect x="1738" y="952" width="16" height="16" rx="3" fill="#272727"/><circle cx="1745" cy="960" r="2.700" fill="#a1a1a1"/>
<rect x="1754" y="952" width="134" height="16" rx="3" fill="#525252"/>
<text x="1807.500" y="964" textLength="27" lengthAdjust="spacingAndGlyphs">0.000</text><use href="#o" x="1898" y="960"/>

<text x="1630" y="986" textLength="98" lengthAdjust="spacingAndGlyphs">Оттенок блеска тк...</text>
<rect x="1738" y="974" width="16" height="16" rx="3" fill="#272727"/><circle cx="1745" cy="982" r="2.700" fill="#a1a1a1"/>
<rect x="1754" y="974" width="134" height="16" rx="3" fill="#525252"/><rect x="1754" y="974" width="66" height="16" fill="#4772b3"/>
<text x="1807.500" y="986" textLength="27" lengthAdjust="spacingAndGlyphs">0.500</text><use href="#o" x="1898" y="982"/>

<text x="1710" y="1008" textLength="18" lengthAdjust="spacingAndGlyphs">Лак</text>
<rect x="1738" y="996" width="16" height="16" rx="3" fill="#272727"/><circle cx="1745" cy="1004" r="2.700" fill="#a1a1a1"/>
<rect x="1754" y="996" width="134" height="16" rx="3" fill="#525252"/>
<text x="1807.500" y="1008" textLength="27" lengthAdjust="spacingAndGlyphs">0.000</text><use href="#o" x="1898" y="1004"/>

<rect x="1738" y="1018" width="16" height="8" rx="2" fill="#272727"/>
<rect x="1754" y="1018" width="134" height="8" rx="2" fill="#525252"/><rect x="1754" y="1018" width="2" height="8" fill="#4772b3"/>

<!-- status bar -->
<rect y="1023" width="1920" height="19" fill="#181818"/>
<use href="#mouse" x="15.500" y="1032"/><rect x="12.500" y="1027" width="3" height="5" fill="#8a8a8a"/>
<text class="s" x="30.500" y="1036" textLength="47" lengthAdjust="spacingAndGlyphs">Выделить</text>
<use href="#mouse" x="225" y="1032"/><rect x="224" y="1028" width="2" height="4" fill="#8a8a8a"/>
<text class="s" x="241" y="1036" textLength="70" lengthAdjust="spacingAndGlyphs">Повернуть вид</text>
<use href="#mouse" x="436" y="1032"/><rect x="436" y="1027" width="3" height="5" fill="#8a8a8a"/>
<text class="s" x="451" y="1036" textLength="136" lengthAdjust="spacingAndGlyphs">Контекстное меню объектов</text>
<text class="s" x="1891" y="1036" textLength="23" lengthAdjust="spacingAndGlyphs">3.6.1</text>
</svg>
</body></html>
